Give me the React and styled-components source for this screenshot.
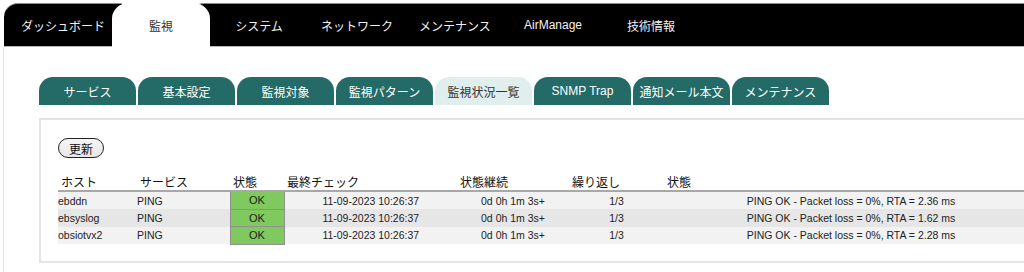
import React from 'react'
import styled, { createGlobalStyle } from 'styled-components'

const GlobalStyle = createGlobalStyle`
    html, body {
        margin: 0;
        padding: 0;
        overflow: hidden;
        background: #fff;
    }
    body {
        font-family: "Liberation Sans", "Noto Sans CJK JP", sans-serif;
        color: #222;
    }
`;

const navItems = ['ダッシュボード', '監視', 'システム', 'ネットワーク', 'メンテナンス', 'AirManage', '技術情報'];
const subTabs = ['サービス', '基本設定', '監視対象', '監視パターン', '監視状況一覧', 'SNMP Trap', '通知メール本文', 'メンテナンス'];

const columns = [
    { label: 'ホスト', width: 79 },
    { label: 'サービス', width: 93 },
    { label: '状態', width: 54 },
    { label: '最終チェック', width: 173 },
    { label: '状態継続', width: 112 },
    { label: '繰り返し', width: 95 },
    { label: '状態', width: 374 },
];

const rows = [
    { host: 'ebddn', rta: '2.36' },
    { host: 'ebsyslog', rta: '1.62' },
    { host: 'obsiotvx2', rta: '2.28' },
];

function App() {
    const activeNav = 1;
    const activeSub = 4;

    return (
        <Page>
            <GlobalStyle />
            <NavBar>
                {navItems.map((item, i) => (
                    <NavTab
                        key={item}
                        $first={i === 0}
                        $active={i === activeNav}
                        $afterActive={i === activeNav + 1}
                    >
                        {item}
                    </NavTab>
                ))}
                <NavFill />
            </NavBar>

            <Main>
                <SubTabs>
                    {subTabs.map((tab, i) => (
                        <SubTab key={tab} $active={i === activeSub}>{tab}</SubTab>
                    ))}
                </SubTabs>

                <Panel>
                    <RefreshButton>更新</RefreshButton>
                    <StatusTable>
                        <colgroup>
                            {columns.map((c, i) => <col key={i} style={{ width: c.width }} />)}
                        </colgroup>
                        <thead>
                            <tr>
                                {columns.map((c, i) => <HeadCell key={i}>{c.label}</HeadCell>)}
                            </tr>
                        </thead>
                        <tbody>
                            {rows.map((r, i) => (
                                <Row key={r.host} $odd={i % 2 === 1}>
                                    <Cell>{r.host}</Cell>
                                    <Cell>PING</Cell>
                                    <OkCell>OK</OkCell>
                                    <Cell $align="center">11-09-2023 10:26:37</Cell>
                                    <Cell $align="center">0d 0h 1m 3s+</Cell>
                                    <Cell $align="center">1/3</Cell>
                                    <Cell $align="center">PING OK - Packet loss = 0%, RTA = {r.rta} ms</Cell>
                                </Row>
                            ))}
                        </tbody>
                    </StatusTable>
                </Panel>
            </Main>
        </Page>
    )
}

const Page = styled.div`
    padding-top: 3px;
    width: 1024px;
    height: 272px;
    box-sizing: border-box;
    overflow: hidden;
`;

const NavBar = styled.nav`
    display: flex;
    height: 44px;
    margin-left: 4px;
`;

const NavTab = styled.a`
    flex: 0 0 ${props => props.$first ? '118px' : props.$afterActive ? '118px' : '98px'};
    box-sizing: border-box;
    display: flex;
    align-items: center;
    justify-content: center;
    padding-left: ${props => props.$afterActive ? '20px' : '0'};
    margin-left: ${props => props.$active ? '-10px' : props.$afterActive ? '-20px' : '0'};
    background: ${props => props.$active ? '#fff' : '#000'};
    color: ${props => props.$active ? '#333' : '#f2f2f2'};
    border-top: 1px solid ${props => props.$active ? '#fff' : '#8a8a8a'};
    border-bottom: 1px solid ${props => props.$active ? '#fff' : '#b8b8b8'};
    border-radius: ${props => props.$active ? '16px 16px 0 0' : (props.$first || props.$afterActive) ? '14px 0 0 0' : '0'};
    z-index: ${props => props.$active ? 1 : 0};
    font-size: 12px;
    white-space: nowrap;
    cursor: pointer;
`;

const NavFill = styled.div`
    flex: 1;
    background: #000;
    border-top: 1px solid #8a8a8a;
    border-bottom: 1px solid #b8b8b8;
`;

const Main = styled.main`
    margin-left: 3px;
    border-left: 1px solid #e4e4e4;
    padding: 30px 0 0 35px;
    height: 225px;
    box-sizing: border-box;
`;

const SubTabs = styled.div`
    display: flex;
    gap: 2px;
    height: 28px;
`;

const SubTab = styled.div`
    flex: 0 0 97px;
    display: flex;
    align-items: center;
    justify-content: center;
    border-radius: 14px 14px 0 0;
    background: ${props => props.$active ? '#e0efee' : '#246a66'};
    color: ${props => props.$active ? '#333' : '#fff'};
    font-size: 12px;
    white-space: nowrap;
`;

const Panel = styled.section`
    margin-top: 13px;
    width: 1010px;
    border: 2px solid #e4e4e4;
    padding: 18px 0 16px 17px;
    box-sizing: border-box;
`;

const RefreshButton = styled.button`
    display: block;
    width: 46px;
    height: 20px;
    padding: 0;
    border: 1.5px solid #222;
    border-radius: 10px;
    background: linear-gradient(#f6f6f6, #e6e6e6);
    font-family: "Liberation Sans", "Noto Sans CJK JP", sans-serif;
    font-size: 12px;
    color: #111;
`;

const StatusTable = styled.table`
    margin-top: 15px;
    width: 980px;
    table-layout: fixed;
    border-collapse: collapse;
`;

const HeadCell = styled.th`
    height: 17px;
    padding: 0 0 0 3px;
    text-align: left;
    font-size: 12px;
    font-weight: normal;
    color: #111;
    border-bottom: 2px solid #a8a8a8;
    white-space: nowrap;
`;

const Row = styled.tr`
    background: ${props => props.$odd ? '#e6e6e6' : '#f3f2f2'};
`;

const Cell = styled.td`
    height: 16.5px;
    padding: 0;
    text-align: ${props => props.$align || 'left'};
    font-size: 10.5px;
    color: #222;
    white-space: nowrap;
`;

const OkCell = styled(Cell)`
    text-align: center;
    background: #7fc95f;
    border: 1px solid #8f8f8f;
    font-size: 11px;
`;

export default App
